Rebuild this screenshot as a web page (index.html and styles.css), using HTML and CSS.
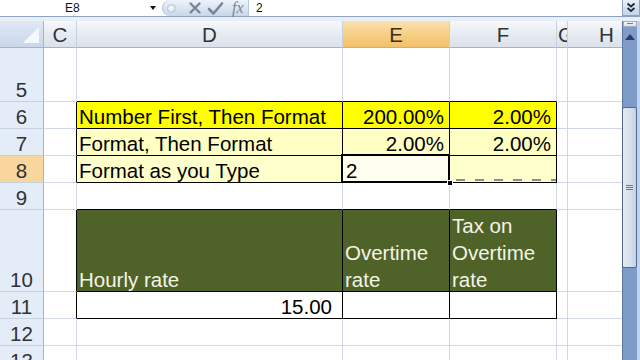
FILE: index.html
```html
<!DOCTYPE html>
<html>
<head>
<meta charset="utf-8">
<link rel="stylesheet" href="styles.css">
</head>
<body>
<div class="app">
  <div class="formula-bar">
    <div class="namebox"><span class="name">E8</span><span class="dd"></span></div>
    <div class="pill">
      <span class="bubble"></span>
      <svg class="ic" width="14" height="14" viewBox="0 0 14 14"><path d="M2.5 2.5 L11.5 11.5 M11.5 2.5 L2.5 11.5" stroke="#7a8595" stroke-width="2.4" stroke-linecap="round"/></svg>
      <svg class="ic" width="17" height="15" viewBox="0 0 17 15"><path d="M2 8 L6.5 12.5 L15 2.5" fill="none" stroke="#7a8595" stroke-width="2.6" stroke-linecap="round" stroke-linejoin="round"/></svg>
      <span class="fx">fx</span>
    </div>
    <div class="formula">2</div>
    <div class="expand">
      <svg width="10" height="11" viewBox="0 0 10 11"><path d="M1.5 1.5 L5 4.5 L8.5 1.5 M1.5 6 L5 9 L8.5 6" fill="none" stroke="#1e2a3a" stroke-width="1.8"/></svg>
    </div>
  </div>
  <div class="gap"></div>
  <div class="main">
    <div class="sheet">
      <div class="corner"><span class="tri"></span></div>
      <div class="ch">C</div>
      <div class="ch">D</div>
      <div class="ch sel">E</div>
      <div class="ch">F</div>
      <div class="ch narrow">G</div>
      <div class="ch">H</div>

      <div class="rh"><span>5</span></div>
      <div class="c"></div>
      <div class="c bb"></div>
      <div class="c bb"></div>
      <div class="c bb"></div>
      <div class="c"></div>
      <div class="c"></div>

      <div class="rh"><span>6</span></div>
      <div class="c br"></div>
      <div class="c box yel"><span>Number First, Then Format</span></div>
      <div class="c box yel num"><span>200.00%</span></div>
      <div class="c box yel num"><span>2.00%</span></div>
      <div class="c"></div>
      <div class="c"></div>

      <div class="rh"><span>7</span></div>
      <div class="c br"></div>
      <div class="c box lt"><span>Format, Then Format</span></div>
      <div class="c box lt num"><span>2.00%</span></div>
      <div class="c box lt num"><span>2.00%</span></div>
      <div class="c"></div>
      <div class="c"></div>

      <div class="rh sel"><span>8</span></div>
      <div class="c br"></div>
      <div class="c box lt2"><span>Format as you Type</span></div>
      <div class="c box active"><span>2</span><i class="handle"></i></div>
      <div class="c box lt2 dashed"></div>
      <div class="c"></div>
      <div class="c"></div>

      <div class="rh"><span>9</span></div>
      <div class="c"></div>
      <div class="c bb"></div>
      <div class="c bb"></div>
      <div class="c bb"></div>
      <div class="c"></div>
      <div class="c"></div>

      <div class="rh"><span>10</span></div>
      <div class="c br"></div>
      <div class="c box green"><span>Hourly rate</span></div>
      <div class="c box green"><span>Overtime rate</span></div>
      <div class="c box green"><span>Tax on Overtime rate</span></div>
      <div class="c"></div>
      <div class="c"></div>

      <div class="rh"><span>11</span></div>
      <div class="c br"></div>
      <div class="c box num acct"><span>15.00</span></div>
      <div class="c box"></div>
      <div class="c box"></div>
      <div class="c"></div>
      <div class="c"></div>

      <div class="rh"><span>12</span></div>
      <div class="c"></div>
      <div class="c"></div>
      <div class="c"></div>
      <div class="c"></div>
      <div class="c"></div>
      <div class="c"></div>

      <div class="rh"><span>13</span></div>
      <div class="c"></div>
      <div class="c"></div>
      <div class="c"></div>
      <div class="c"></div>
      <div class="c"></div>
      <div class="c"></div>
    </div>
    <div class="vscroll">
      <div class="split"></div>
      <div class="up">
        <svg width="10" height="6" viewBox="0 0 10 6"><path d="M0 6 L5 0 L10 6 Z" fill="#2a3f66"/></svg>
      </div>
      <div class="thumb"><span class="grip"></span></div>
    </div>
  </div>
</div>
</body>
</html>
```

FILE: styles.css
```css
* { box-sizing: border-box; }
html, body { margin: 0; padding: 0; background: #fff; overflow: hidden; }
.app {
  width: 640px; height: 360px; overflow: hidden;
  font-family: "Liberation Sans", Arial, sans-serif;
  display: flex; flex-direction: column;
}
.formula-bar {
  height: 17px; flex: none;
  display: flex; align-items: stretch;
  background: #fff;
  border-bottom: 1px solid #8ea3c2;
  font-size: 12px; color: #111;
}
.namebox {
  width: 160px; position: relative;
  display: flex; align-items: center;
}
.namebox .name { margin-left: 65px; }
.namebox .dd {
  position: absolute; left: 150px; top: 6px;
  width: 0; height: 0;
  border-left: 3px solid transparent; border-right: 3px solid transparent;
  border-top: 4px solid #111;
}
.pill {
  width: 86px; margin-left: 2px;
  background: linear-gradient(#eef3fa, #c9d6ea);
  border-radius: 10px 0 0 10px;
  border-left: 1px solid #b0c0d8;
  display: flex; align-items: center; gap: 5px;
  padding-left: 4px;
}
.bubble {
  width: 9px; height: 9px; border-radius: 50%;
  background: radial-gradient(circle at 40% 40%, #fff, #c6d1e0);
  border: 1px solid #b9c5d6;
  margin-right: 7px;
}
.ic { display: block; flex: none; }
.fx {
  font-family: "Liberation Serif", serif; font-style: italic;
  font-size: 16px; color: #7a8595; margin-left: 3px;
  line-height: 16px;
}
.formula {
  flex: 1; border-left: 1px solid #b9c6d8;
  padding-left: 7px; display: flex; align-items: center;
}
.expand {
  width: 18px; flex: none;
  background: linear-gradient(#e6eef9, #c3d3ea);
  border: 1px solid #8ea3c2; border-top: none;
  display: flex; align-items: center; justify-content: center;
}
.gap { height: 4px; flex: none; background: #eaeff6; }
.main { flex: 1; display: flex; overflow: hidden; }
.sheet {
  width: 622px; flex: none; overflow: hidden;
  display: grid;
  grid-template-columns: 44px 33px 266px 107px 107px 11px 78px;
  grid-template-rows: 27px 54px 27px 27px 27px 27px 82px 27px 27px 27px;
  font-size: 20.5px;
}
.corner {
  background: linear-gradient(#dfe8f5, #c9d7ea);
  border-right: 1px solid #9eb6ce; border-bottom: 1px solid #9eb6ce;
  position: relative;
}
.corner .tri {
  position: absolute; right: 4px; bottom: 4px;
  width: 0; height: 0;
  border-left: 16px solid transparent; border-bottom: 16px solid #f4f7fb;
}
.ch {
  background: linear-gradient(#f6f8fb, #e4e9f0 60%, #dbe2ec);
  border-right: 1px solid #c5d1e0; border-bottom: 1px solid #9eb6ce;
  display: flex; align-items: center; justify-content: center;
  color: #2e3338; line-height: 27px; overflow: hidden;
}
.ch.sel {
  background: linear-gradient(#fbe2b0, #f6cc7e 60%, #f2c06a);
  color: #3b2e1a;
}
.ch.narrow { justify-content: flex-start; padding-left: 1px; }
.rh {
  background: #e4ecf7;
  border-right: 1px solid #9eb6ce; border-bottom: 1px solid #c5d1e0;
  display: flex; align-items: flex-end; justify-content: center;
  color: #2e3338; line-height: 27px;
}
.rh.sel { background: #f9d69e; }
.rh span, .c span { margin-bottom: -2px; }
.c {
  border-right: 1px solid #d0d7e5; border-bottom: 1px solid #d0d7e5;
  display: flex; align-items: flex-end;
  padding: 0 4px 0 2px;
  line-height: 27px; color: #000;
  position: relative; white-space: nowrap;
}
.c.bb { border-bottom-color: #000; }
.c.br { border-right-color: #000; }
.c.box { border-right-color: #000; border-bottom-color: #000; }
.c.yel { background: #ffff00; }
.c.lt { background: #ffffc4; }
.c.lt2 { background: #ffffcc; }
.c.num { justify-content: flex-end; padding-right: 5px; }
.c.acct { padding-right: 10px; }
.c.green {
  background: #4f6228; color: #f4f4e6;
  white-space: normal;
}
.c.active { background: #fffff0; padding-left: 3px; }
.c.active::after {
  content: ""; position: absolute;
  left: -2px; top: -2px; right: -1px; bottom: -1px;
  border: 2px solid #000;
}
.handle {
  position: absolute; right: -4px; bottom: -4px;
  width: 6px; height: 6px; background: #000;
  border: 1px solid #fff; z-index: 2;
}
.c.dashed::after {
  content: ""; position: absolute;
  left: 6px; right: 0; bottom: 1px; height: 2px;
  background: repeating-linear-gradient(90deg, #8c8c8c 0px, #8c8c8c 9px, transparent 9px, transparent 19px);
}
.vscroll {
  width: 18px; height: 339px; flex: none;
  background: #7f9bc8;
  border-left: 1px solid #5c77a5;
  border-right: 3px solid #bfd4ef;
}
.split {
  height: 6px;
  background: linear-gradient(#f1f5fa, #d7e1ee);
  border: 1px solid #9eb0c8;
  position: relative;
}
.split::after {
  content: ""; position: absolute; left: 3px; right: 3px; top: 1px;
  border-top: 1px solid #6d7f99;
}
.up {
  height: 80px;
  display: flex; justify-content: center; padding-top: 7px;
}
.thumb {
  height: 161px; width: 15px; margin-left: -1px;
  background: linear-gradient(90deg, #e2e9f3, #d5dfec 60%, #c4d1e4);
  border: 1px solid #55698a; border-radius: 2px;
  display: flex; align-items: center; justify-content: center;
}
.grip {
  width: 7px; height: 5px;
  border-top: 1px solid #6a7a92; border-bottom: 1px solid #6a7a92;
  position: relative;
}
.grip::after {
  content: ""; position: absolute; left: 0; right: 0; top: 1px;
  border-top: 1px solid #6a7a92;
}
```
